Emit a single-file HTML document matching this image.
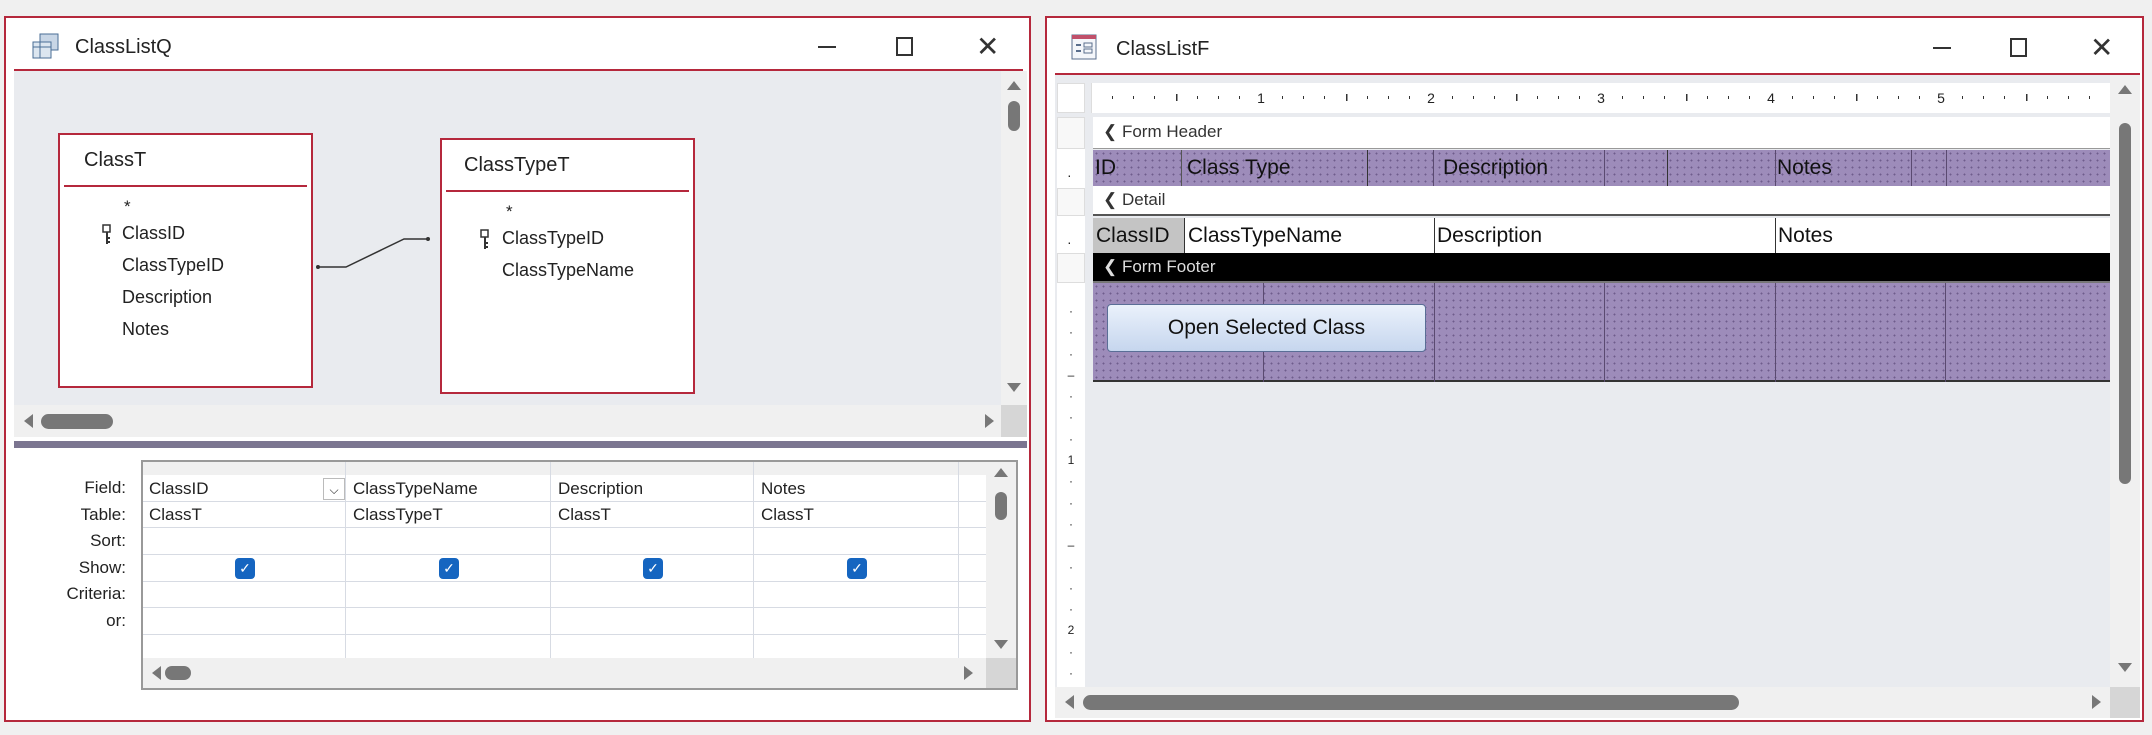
<!DOCTYPE html>
<html><head><meta charset="utf-8"><style>
*{margin:0;padding:0;box-sizing:border-box}
body{width:2152px;height:735px;background:#f0f0f0;position:relative;overflow:hidden;font-family:"Liberation Sans",sans-serif;color:#222}
div,span{position:absolute}
.win{background:#fff;border:2px solid #b5283c}
.t{white-space:nowrap}
.gray{background:#e9ebef}
.purple{background-color:#9d8cba;background-image:radial-gradient(circle,#6e5d8c 0.8px,transparent 1.1px);background-size:7px 7px}
.vl{width:1px;background:#5a4a70}
.cb{width:20px;height:21px;background:#1565c0;border-radius:4px;color:#fff;font-size:14px;text-align:center;line-height:21px}
.row{height:1px;background:#d7dbe3;left:0;right:0}
.col{width:1px;background:#d7dbe3;top:0;bottom:30px}
</style></head><body>

<!-- LEFT WINDOW -->
<div class="win" style="left:4px;top:16px;width:1027px;height:706px">
 <svg style="position:absolute;left:24px;top:14px" width="32" height="30" viewBox="0 0 32 30"><rect x="10" y="2" width="18" height="16" fill="#c8d6e6" stroke="#4a6e96"/><rect x="3" y="10" width="18" height="16" fill="#dce6f0" stroke="#4a6e96"/><line x1="3" y1="15" x2="21" y2="15" stroke="#4a6e96"/><line x1="10" y1="10" x2="10" y2="26" stroke="#4a6e96"/></svg>
 <span class="t" style="left:69px;top:18px;font-size:20px">ClassListQ</span>
 <span style="left:812px;top:28px;width:18px;height:2px;background:#333"></span>
 <span style="left:890px;top:19px;width:17px;height:19px;border:2px solid #333"></span>
 <span class="t" style="left:970px;top:12px;font-size:28px;font-weight:200;color:#333">✕</span>
 <span style="left:8px;top:51px;width:1009px;height:2px;background:#b5283c"></span>
 <!-- upper diagram -->
 <div class="gray" style="left:8px;top:53px;width:987px;height:334px">
  <div style="left:44px;top:62px;width:255px;height:255px;background:#fff;border:2px solid #b5283c">
   <span class="t" style="left:24px;top:14px;font-size:20px">ClassT</span>
   <span style="left:4px;top:50px;width:243px;height:2px;background:#b5283c"></span>
   <span class="t" style="left:64px;top:62px;font-size:17px">*</span>
   <svg style="position:absolute;left:42px;top:89px" width="10" height="22" viewBox="0 0 10 22"><rect x="1" y="1" width="7" height="7" fill="#fff" stroke="#333" stroke-width="1.5"/><rect x="4" y="8" width="2" height="12" fill="#333"/><rect x="6" y="13" width="2" height="2" fill="#333"/><rect x="6" y="17" width="2" height="2" fill="#333"/></svg>
   <span class="t" style="left:62px;top:88px;font-size:18px">ClassID</span>
   <span class="t" style="left:62px;top:120px;font-size:18px">ClassTypeID</span>
   <span class="t" style="left:62px;top:152px;font-size:18px">Description</span>
   <span class="t" style="left:62px;top:184px;font-size:18px">Notes</span>
  </div>
  <div style="left:426px;top:67px;width:255px;height:256px;background:#fff;border:2px solid #b5283c">
   <span class="t" style="left:22px;top:14px;font-size:20px">ClassTypeT</span>
   <span style="left:4px;top:50px;width:243px;height:2px;background:#b5283c"></span>
   <span class="t" style="left:64px;top:62px;font-size:17px">*</span>
   <svg style="position:absolute;left:38px;top:89px" width="10" height="22" viewBox="0 0 10 22"><rect x="1" y="1" width="7" height="7" fill="#fff" stroke="#333" stroke-width="1.5"/><rect x="4" y="8" width="2" height="12" fill="#333"/><rect x="6" y="13" width="2" height="2" fill="#333"/><rect x="6" y="17" width="2" height="2" fill="#333"/></svg>
   <span class="t" style="left:60px;top:88px;font-size:18px">ClassTypeID</span>
   <span class="t" style="left:60px;top:120px;font-size:18px">ClassTypeName</span>
  </div>
  <svg style="position:absolute;left:0;top:0" width="987" height="334"><polyline points="304,196 332,196 390,168 414,168" fill="none" stroke="#333" stroke-width="1.5"/><circle cx="304" cy="196" r="2" fill="#333"/><circle cx="414" cy="168" r="2" fill="#333"/></svg>
 </div>
 <div style="left:995px;top:53px;width:26px;height:334px;background:#f0f0f0">
  <span style="left:6px;top:10px;border:7px solid transparent;border-bottom:9px solid #777;border-top:0"></span>
  <span style="left:7px;top:30px;width:12px;height:30px;background:#777;border-radius:6px"></span>
  <span style="left:6px;top:312px;border:7px solid transparent;border-top:9px solid #777;border-bottom:0"></span>
 </div>
 <div style="left:8px;top:387px;width:987px;height:32px;background:#f0f0f0">
  <span style="left:10px;top:9px;border:7px solid transparent;border-right:9px solid #777;border-left:0"></span>
  <span style="left:27px;top:9px;width:72px;height:15px;background:#777;border-radius:8px"></span>
  <span style="left:971px;top:9px;border:7px solid transparent;border-left:9px solid #777;border-right:0"></span>
 </div>
 <div style="left:995px;top:387px;width:26px;height:32px;background:#d6d6d6"></div>
 <span style="left:8px;top:423px;width:1013px;height:7px;background:#7b7590"></span>
 <span class="t" style="left:485px;top:418px;font-size:9px;color:#fff;letter-spacing:-1px">''''''''''</span>
 <!-- lower grid -->
 <span class="t" style="left:0;width:120px;text-align:right;font-size:17px;line-height:26.6px;top:457px">Field:<br>Table:<br>Sort:<br>Show:<br>Criteria:<br>or:</span>
 <div style="left:135px;top:442px;width:877px;height:230px;border:2px solid #999;background:#fff">
  <div style="left:0;top:0;width:843px;height:13px;background:#f0f0f0"></div>
  <div class="col" style="left:202px"></div><div class="col" style="left:407px"></div><div class="col" style="left:610px"></div><div class="col" style="left:815px"></div>
  <div class="row" style="top:39px"></div><div class="row" style="top:65px"></div><div class="row" style="top:92px"></div><div class="row" style="top:119px"></div><div class="row" style="top:145px"></div><div class="row" style="top:172px"></div>
  <span class="t" style="left:6px;top:17px;font-size:17px">ClassID</span>
  <span style="left:180px;top:16px;width:22px;height:22px;border:1px solid #bbb;font-size:12px;text-align:center;line-height:22px">⌵</span>
  <span class="t" style="left:210px;top:17px;font-size:17px">ClassTypeName</span>
  <span class="t" style="left:415px;top:17px;font-size:17px">Description</span>
  <span class="t" style="left:618px;top:17px;font-size:17px">Notes</span>
  <span class="t" style="left:6px;top:43px;font-size:17px">ClassT</span>
  <span class="t" style="left:210px;top:43px;font-size:17px">ClassTypeT</span>
  <span class="t" style="left:415px;top:43px;font-size:17px">ClassT</span>
  <span class="t" style="left:618px;top:43px;font-size:17px">ClassT</span>
  <span class="cb" style="left:92px;top:96px">✓</span><span class="cb" style="left:296px;top:96px">✓</span><span class="cb" style="left:500px;top:96px">✓</span><span class="cb" style="left:704px;top:96px">✓</span>
  <div style="left:843px;top:0;width:30px;height:196px;background:#f0f0f0">
   <span style="left:8px;top:6px;border:7px solid transparent;border-bottom:9px solid #777;border-top:0"></span>
   <span style="left:9px;top:30px;width:12px;height:28px;background:#777;border-radius:6px"></span>
   <span style="left:8px;top:178px;border:7px solid transparent;border-top:9px solid #777;border-bottom:0"></span>
  </div>
  <div style="left:0;top:196px;width:843px;height:30px;background:#f0f0f0">
   <span style="left:9px;top:8px;border:7px solid transparent;border-right:9px solid #777;border-left:0"></span>
   <span style="left:22px;top:8px;width:26px;height:14px;background:#777;border-radius:7px"></span>
   <span style="left:821px;top:8px;border:7px solid transparent;border-left:9px solid #777;border-right:0"></span>
  </div>
  <div style="left:843px;top:196px;width:30px;height:30px;background:#d6d6d6"></div>
 </div>
</div>

<!-- RIGHT WINDOW -->
<div class="win" style="left:1045px;top:16px;width:1099px;height:706px">
 <svg style="position:absolute;left:22px;top:14px" width="30" height="30" viewBox="0 0 30 30"><rect x="3" y="3" width="24" height="24" fill="#f4f6fa" stroke="#5a6e8c"/><rect x="3" y="3" width="24" height="4" fill="#c0506a"/><line x1="7" y1="13" x2="12" y2="13" stroke="#5a6e8c" stroke-width="2"/><line x1="7" y1="19" x2="12" y2="19" stroke="#5a6e8c" stroke-width="2"/><rect x="15" y="11" width="8" height="4" fill="none" stroke="#5a6e8c"/><rect x="15" y="17" width="8" height="4" fill="none" stroke="#5a6e8c"/></svg>
 <span class="t" style="left:69px;top:20px;font-size:20px">ClassListF</span>
 <span style="left:886px;top:29px;width:18px;height:2px;background:#333"></span>
 <span style="left:963px;top:20px;width:17px;height:19px;border:2px solid #333"></span>
 <span class="t" style="left:1043px;top:13px;font-size:28px;font-weight:200;color:#333">✕</span>
 <span style="left:8px;top:55px;width:1085px;height:2px;background:#b5283c"></span>
 <div class="gray" style="left:8px;top:57px;width:1055px;height:612px;background:#e9ebef">
  <!-- ruler -->
  <div style="left:2px;top:8px;width:28px;height:30px;background:#fff;border:1px solid #ddd"></div>
  <div style="left:36px;top:8px;width:1019px;height:30px;background:#fff;border-left:1px solid #ddd">
   <svg width="1019" height="30" style="position:absolute;left:0;top:0">
    <g fill="#333">
     <rect x="20" y="13" width="1" height="3"/><rect x="41" y="13" width="1" height="3"/><rect x="62" y="13" width="1" height="3"/><rect x="84" y="11" width="1.5" height="7"/><rect x="105" y="13" width="1" height="3"/><rect x="126" y="13" width="1" height="3"/><rect x="147" y="13" width="1" height="3"/>
     <rect x="190" y="13" width="1" height="3"/><rect x="211" y="13" width="1" height="3"/><rect x="232" y="13" width="1" height="3"/><rect x="254" y="11" width="1.5" height="7"/><rect x="275" y="13" width="1" height="3"/><rect x="296" y="13" width="1" height="3"/><rect x="317" y="13" width="1" height="3"/>
     <rect x="360" y="13" width="1" height="3"/><rect x="381" y="13" width="1" height="3"/><rect x="402" y="13" width="1" height="3"/><rect x="424" y="11" width="1.5" height="7"/><rect x="445" y="13" width="1" height="3"/><rect x="466" y="13" width="1" height="3"/><rect x="487" y="13" width="1" height="3"/>
     <rect x="530" y="13" width="1" height="3"/><rect x="551" y="13" width="1" height="3"/><rect x="572" y="13" width="1" height="3"/><rect x="594" y="11" width="1.5" height="7"/><rect x="615" y="13" width="1" height="3"/><rect x="636" y="13" width="1" height="3"/><rect x="657" y="13" width="1" height="3"/>
     <rect x="700" y="13" width="1" height="3"/><rect x="721" y="13" width="1" height="3"/><rect x="742" y="13" width="1" height="3"/><rect x="764" y="11" width="1.5" height="7"/><rect x="785" y="13" width="1" height="3"/><rect x="806" y="13" width="1" height="3"/><rect x="827" y="13" width="1" height="3"/>
     <rect x="870" y="13" width="1" height="3"/><rect x="891" y="13" width="1" height="3"/><rect x="912" y="13" width="1" height="3"/><rect x="934" y="11" width="1.5" height="7"/><rect x="955" y="13" width="1" height="3"/><rect x="976" y="13" width="1" height="3"/><rect x="997" y="13" width="1" height="3"/>
    </g>
    <g font-size="14" font-family="Liberation Sans" fill="#222" text-anchor="middle"><text x="169" y="20">1</text><text x="339" y="20">2</text><text x="509" y="20">3</text><text x="679" y="20">4</text><text x="849" y="20">5</text></g>
   </svg>
  </div>
  <!-- vertical ruler -->
  <div style="left:2px;top:42px;width:28px;height:570px;background:#fff"></div>
  <div style="left:2px;top:42px;width:28px;height:32px;border:1px solid #ddd;background:#f8f8f8"></div>
  <div style="left:2px;top:113px;width:28px;height:28px;border:1px solid #ddd;background:#f8f8f8"></div>
  <div style="left:2px;top:178px;width:28px;height:30px;border:1px solid #ddd;background:#f8f8f8"></div>
  <span class="t" style="left:12px;top:92px;font-size:14px">·</span>
  <span class="t" style="left:12px;top:159px;font-size:14px">·</span>
  <span class="t" style="left:10px;top:226px;font-size:12px;line-height:21.3px;text-align:center;width:12px">·<br>·<br>·<br>–<br>·<br>·<br>·<br>1<br>·<br>·<br>·<br>–<br>·<br>·<br>·<br>2<br>·<br>·<br>·</span>
  <!-- sections -->
  <div style="left:38px;top:42px;width:1017px;height:32px;background:#fff;border-bottom:1px solid #999"><span class="t" style="left:10px;top:5px;font-size:17px;color:#333">❮ Form Header</span></div>
  <div class="purple" style="left:38px;top:75px;width:1017px;height:36px">
   <span class="t" style="left:2px;top:6px;font-size:21px;color:#111">ID</span>
   <div class="vl" style="left:88px;top:0;height:36px;background:#555"></div>
   <span class="t" style="left:94px;top:6px;font-size:21px;color:#111">Class Type</span>
   <div class="vl" style="left:274px;top:0;height:36px;background:#333"></div>
   <div class="vl" style="left:340px;top:0;height:36px"></div>
   <span class="t" style="left:350px;top:6px;font-size:21px;color:#111">Description</span>
   <div class="vl" style="left:511px;top:0;height:36px"></div>
   <div class="vl" style="left:574px;top:0;height:36px;background:#333"></div>
   <div class="vl" style="left:682px;top:0;height:36px"></div>
   <span class="t" style="left:684px;top:6px;font-size:21px;color:#111">Notes</span>
   <div class="vl" style="left:818px;top:0;height:36px"></div>
   <div class="vl" style="left:853px;top:0;height:36px"></div>
  </div>
  <div style="left:38px;top:111px;width:1017px;height:30px;background:#fff;border-bottom:2px solid #555"><span class="t" style="left:10px;top:4px;font-size:17px;color:#333">❮ Detail</span></div>
  <div style="left:38px;top:143px;width:1017px;height:35px;background:#fff">
   <div style="left:0;top:0;width:91px;height:35px;background:#c4c4c4"></div>
   <span class="t" style="left:3px;top:6px;font-size:21px;color:#111">ClassID</span>
   <div style="left:91px;top:0;width:1px;height:35px;background:#333"></div>
   <span class="t" style="left:95px;top:6px;font-size:21px;color:#111">ClassTypeName</span>
   <div style="left:341px;top:0;width:1px;height:35px;background:#333"></div>
   <span class="t" style="left:344px;top:6px;font-size:21px;color:#111">Description</span>
   <div style="left:682px;top:0;width:1px;height:35px;background:#333"></div>
   <span class="t" style="left:685px;top:6px;font-size:21px;color:#111">Notes</span>
  </div>
  <div style="left:38px;top:178px;width:1017px;height:30px;background:#000;border-bottom:2px solid #777"><span class="t" style="left:10px;top:4px;font-size:17px;color:#ddd">❮ Form Footer</span></div>
  <div class="purple" style="left:38px;top:208px;width:1017px;height:99px;border-bottom:2px solid #333">
   <div class="vl" style="left:170px;top:0;height:99px"></div>
   <div class="vl" style="left:341px;top:0;height:99px"></div>
   <div class="vl" style="left:511px;top:0;height:99px"></div>
   <div class="vl" style="left:682px;top:0;height:99px"></div>
   <div class="vl" style="left:852px;top:0;height:99px"></div>
   <div style="left:14px;top:21px;width:319px;height:48px;border:1px solid #5a6e96;border-radius:4px;background:linear-gradient(#eaf1fb,#c6d6ee);font-size:21px;text-align:center;line-height:46px;color:#111">Open Selected Class</div>
  </div>
 </div>
 <div style="left:1063px;top:57px;width:30px;height:612px;background:#f0f0f0">
  <span style="left:8px;top:10px;border:7px solid transparent;border-bottom:9px solid #777;border-top:0"></span>
  <span style="left:9px;top:48px;width:12px;height:361px;background:#777;border-radius:6px"></span>
  <span style="left:8px;top:588px;border:7px solid transparent;border-top:9px solid #777;border-bottom:0"></span>
 </div>
 <div style="left:8px;top:669px;width:1055px;height:31px;background:#f0f0f0">
  <span style="left:10px;top:8px;border:7px solid transparent;border-right:9px solid #777;border-left:0"></span>
  <span style="left:28px;top:8px;width:656px;height:15px;background:#777;border-radius:8px"></span>
  <span style="left:1037px;top:8px;border:7px solid transparent;border-left:9px solid #777;border-right:0"></span>
 </div>
 <div style="left:1063px;top:669px;width:30px;height:31px;background:#d6d6d6"></div>
</div>
</body></html>
